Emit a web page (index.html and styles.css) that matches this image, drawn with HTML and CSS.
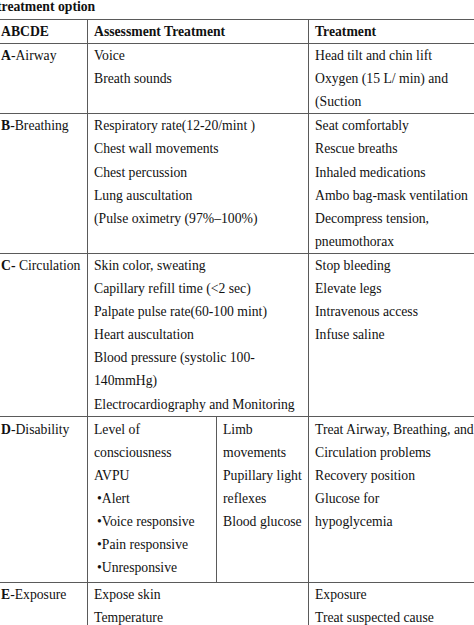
FILE: index.html
```html
<!DOCTYPE html>
<html>
<head>
<meta charset="utf-8">
<link rel="stylesheet" href="styles.css">
</head>
<body>
<div class="page">
  <div class="title">treatment option</div>
  <table class="abc">
    <colgroup>
      <col class="c1"><col class="c2a"><col class="c2b"><col class="c3">
    </colgroup>
    <tr class="head">
      <th>ABCDE</th>
      <th colspan="2">Assessment Treatment</th>
      <th>Treatment</th>
    </tr>
    <tr>
      <td><b>A</b>-Airway</td>
      <td colspan="2"><div>Voice</div><div>Breath sounds</div></td>
      <td><div>Head tilt and chin lift</div><div>Oxygen (15 L/ min) and</div><div>(Suction</div></td>
    </tr>
    <tr>
      <td><b>B</b>-Breathing</td>
      <td colspan="2"><div>Respiratory rate(12-20/mint )</div><div>Chest wall movements</div><div>Chest percussion</div><div>Lung auscultation</div><div>(Pulse oximetry (97%–100%)</div></td>
      <td><div>Seat comfortably</div><div>Rescue breaths</div><div>Inhaled medications</div><div>Ambo bag-mask ventilation</div><div>Decompress tension,</div><div>pneumothorax</div></td>
    </tr>
    <tr>
      <td><b>C-</b> Circulation</td>
      <td colspan="2"><div>Skin color, sweating</div><div>Capillary refill time (&lt;2 sec)</div><div>Palpate pulse rate(60-100 mint)</div><div>Heart auscultation</div><div>Blood pressure (systolic 100-</div><div>140mmHg)</div><div>Electrocardiography and Monitoring</div></td>
      <td><div>Stop bleeding</div><div>Elevate legs</div><div>Intravenous access</div><div>Infuse saline</div></td>
    </tr>
    <tr class="rowd">
      <td><b>D</b>-Disability</td>
      <td><div>Level of</div><div>consciousness</div><div>AVPU</div><div class="bul">•Alert</div><div class="bul">•Voice responsive</div><div class="bul">•Pain responsive</div><div class="bul">•Unresponsive</div></td>
      <td><div>Limb</div><div>movements</div><div>Pupillary light</div><div>reflexes</div><div>Blood glucose</div></td>
      <td><div>Treat Airway, Breathing, and</div><div>Circulation problems</div><div>Recovery position</div><div>Glucose for</div><div>hypoglycemia</div></td>
    </tr>
    <tr>
      <td><b>E</b>-Exposure</td>
      <td colspan="2"><div>Expose skin</div><div>Temperature</div></td>
      <td><div>Exposure</div><div>Treat suspected cause</div></td>
    </tr>
  </table>
</div>
</body>
</html>
```

FILE: styles.css
```css
html, body {
  margin: 0;
  padding: 0;
  background: #ffffff;
}
.page {
  width: 474px;
  height: 625px;
  overflow: hidden;
  font-family: "Liberation Serif", "Times New Roman", serif;
  font-size: 13.7px;
  color: #111111;
}
.title {
  font-weight: bold;
  line-height: 14px;
  height: 14px;
  margin-left: -3px;
  margin-bottom: 5px;
  white-space: nowrap;
}
.abc {
  border-collapse: collapse;
  table-layout: fixed;
  width: 520px;
  margin-left: -6px;
}
.c1 { width: 93px; }
.c2a { width: 129px; }
.c2b { width: 92px; }
.c3 { width: 206px; }
.abc th, .abc td {
  border: 1px solid #5a5a5a;
  padding: 0 0 0 6px;
  vertical-align: top;
  text-align: left;
  line-height: 23.1px;
  white-space: nowrap;
  overflow: hidden;
}
.abc th {
  font-weight: bold;
}
.abc td b {
  font-weight: bold;
}
.abc .rowd td {
  padding-top: 1px;
  padding-bottom: 3px;
}
.bul {
  padding-left: 3px;
}
```
